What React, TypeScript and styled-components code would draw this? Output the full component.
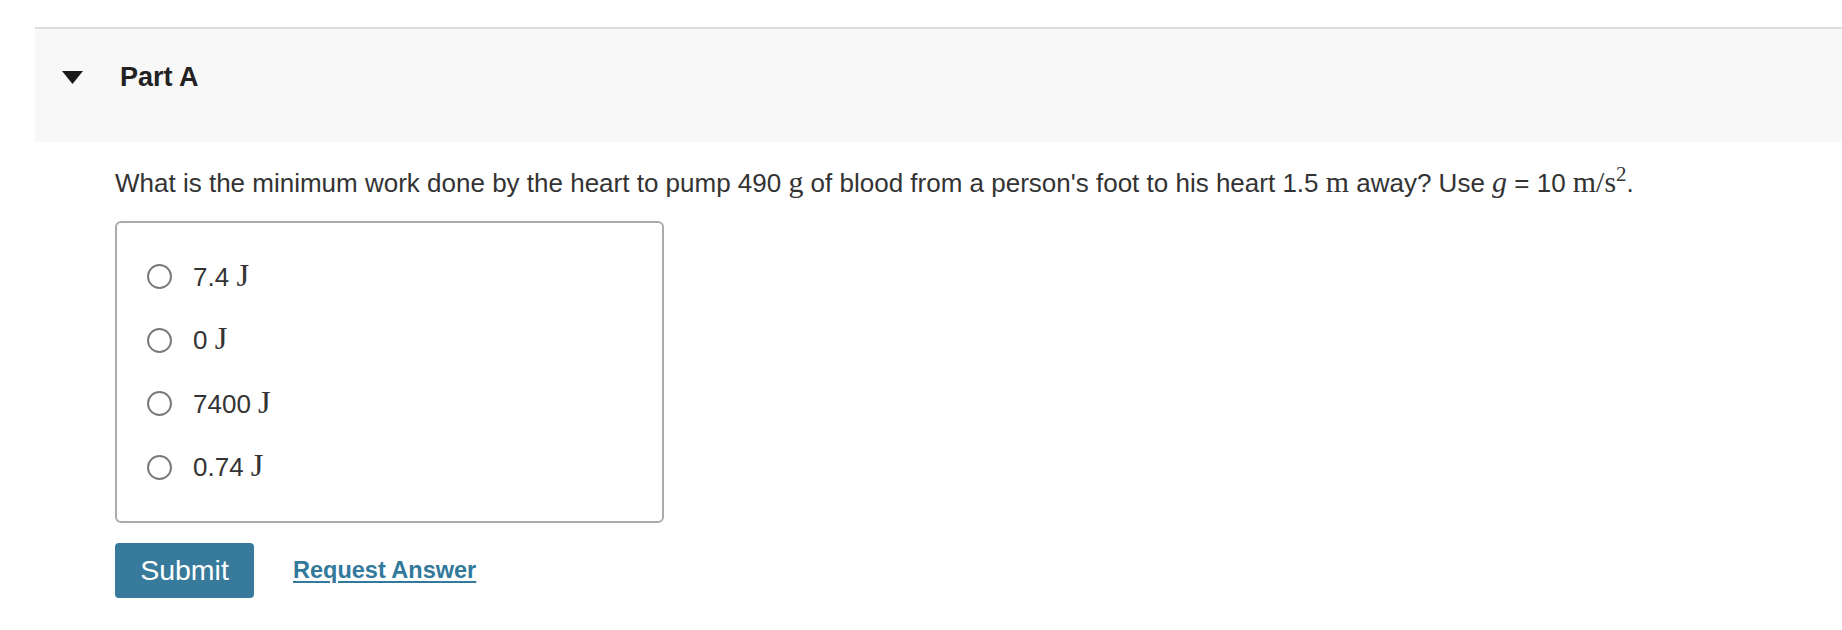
import styled, { createGlobalStyle } from "styled-components";

const GlobalStyle = createGlobalStyle`
  body {
    margin: 0;
    background: #ffffff;
    font-family: "Liberation Sans", Arial, sans-serif;
    color: #333333;
  }
`;

const Page = styled.div`
  padding-top: 27px;
`;

const PartHeader = styled.div`
  margin-left: 35px;
  box-sizing: border-box;
  height: 115px;
  border-top: 2px solid #dcdcdc;
  background-color: #f8f8f8;
  display: flex;
  align-items: center;
  padding: 32px 0 49px 27px;
  gap: 37px;
`;

const Caret = styled.svg`
  width: 21px;
  height: 13px;
  flex-shrink: 0;
`;

const PartTitle = styled.h2`
  margin: 0;
  font-size: 27px;
  line-height: 32px;
  font-weight: 700;
  color: #222222;
`;

const Content = styled.div`
  padding-left: 115px;
`;

const Question = styled.p`
  margin: 25px 0 22px;
  font-size: 26px;
  line-height: 32px;
  color: #333333;
`;

const MathText = styled.span<{ $italic?: boolean; $scale?: number }>`
  font-family: "Liberation Serif", "Times New Roman", serif;
  font-size: ${(p) => p.$scale ?? 1.15}em;
  line-height: 0;
  font-style: ${(p) => (p.$italic ? "italic" : "normal")};

  sup {
    font-size: 0.7em;
    line-height: 0;
  }
`;

const OptionsBox = styled.div`
  width: 549px;
  box-sizing: border-box;
  border: 2px solid #ababab;
  border-radius: 6px;
  padding: 22px 0 22px 29.5px;
`;

const OptionRow = styled.label`
  height: 63.5px;
  display: flex;
  align-items: center;
  gap: 21.5px;
  cursor: pointer;
`;

const RadioCircle = styled.span`
  width: 25px;
  height: 25px;
  box-sizing: border-box;
  border: 2px solid #7a7a7a;
  border-radius: 50%;
  background: #ffffff;
  flex-shrink: 0;
`;

const OptionText = styled.span`
  font-size: 26px;
  line-height: 30px;
  color: #333333;
`;

const Actions = styled.div`
  margin-top: 20px;
  display: flex;
  align-items: center;
  gap: 39px;
`;

const SubmitButton = styled.button`
  width: 139px;
  height: 55px;
  border: none;
  border-radius: 4px;
  background-color: #377a9b;
  color: #ffffff;
  font-family: "Liberation Sans", Arial, sans-serif;
  font-size: 28.5px;
  padding: 0;
  cursor: pointer;
`;

const RequestLink = styled.a`
  font-size: 23.5px;
  font-weight: 700;
  color: #33799b;
  text-decoration: underline;
  text-underline-offset: 3px;
  cursor: pointer;
`;

const options = ["7.4", "0", "7400", "0.74"];

export default function App() {
  return (
    <Page>
      <GlobalStyle />
      <PartHeader>
        <Caret viewBox="0 0 21 13">
          <polygon points="0,0 21,0 10.5,13" fill="#1a1a1a" />
        </Caret>
        <PartTitle>Part A</PartTitle>
      </PartHeader>
      <Content>
        <Question>
          What is the minimum work done by the heart to pump 490 <MathText>g</MathText> of blood
          from a person's foot to his heart 1.5 <MathText>m</MathText> away? Use{" "}
          <MathText $italic>g</MathText> = 10{" "}
          <MathText>
            m/s<sup>2</sup>
          </MathText>
          .
        </Question>
        <OptionsBox>
          {options.map((value) => (
            <OptionRow key={value}>
              <RadioCircle />
              <OptionText>
                {value} <MathText $scale={1.25}>J</MathText>
              </OptionText>
            </OptionRow>
          ))}
        </OptionsBox>
        <Actions>
          <SubmitButton>Submit</SubmitButton>
          <RequestLink>Request Answer</RequestLink>
        </Actions>
      </Content>
    </Page>
  );
}
